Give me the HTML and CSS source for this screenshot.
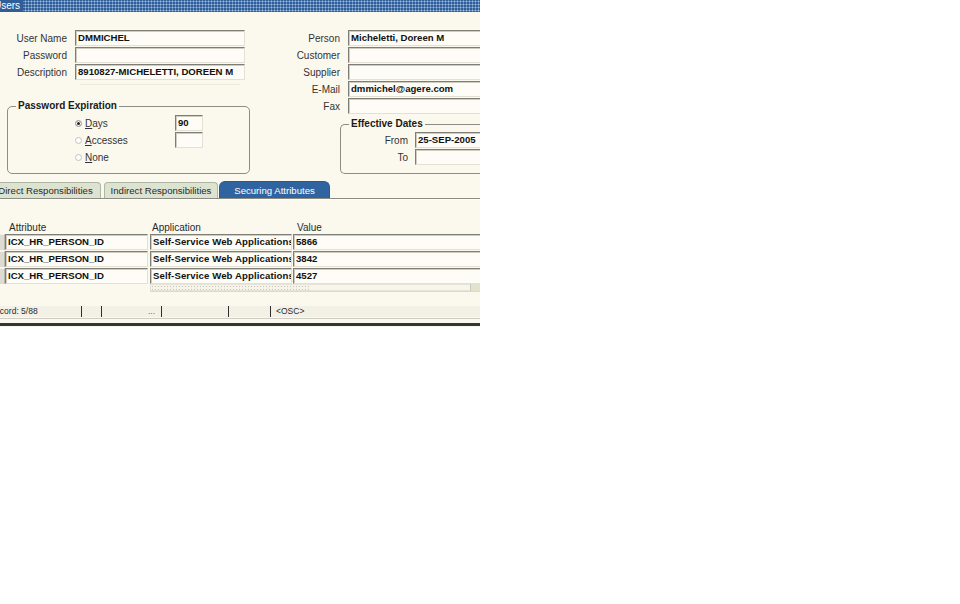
FILE: index.html
```html
<!DOCTYPE html>
<html>
<head>
<meta charset="utf-8">
<link rel="stylesheet" href="styles.css">
</head>
<body>
<div class="window">
  <div class="titlebar"><span class="title">Users</span></div>

  <div class="top">
    <div class="col-left">
      <div class="form form-left">
        <label class="lbl">User Name</label><div class="field">DMMICHEL</div>
        <label class="lbl">Password</label><div class="field"></div>
        <label class="lbl">Description</label><div class="field">8910827-MICHELETTI, DOREEN M</div>
      </div>
      <div class="faint-line"></div>
      <fieldset class="group group-pw">
        <legend>Password Expiration</legend>
        <div class="radio-grid">
          <div class="radio-item"><span class="radio checked"></span><span><u>D</u>ays</span></div>
          <div class="field small">90</div>
          <div class="radio-item"><span class="radio"></span><span><u>A</u>ccesses</span></div>
          <div class="field small"></div>
          <div class="radio-item"><span class="radio"></span><span><u>N</u>one</span></div>
          <div></div>
        </div>
      </fieldset>
    </div>

    <div class="col-right">
      <div class="form form-right">
        <label class="lbl">Person</label><div class="field">Micheletti, Doreen M</div>
        <label class="lbl">Customer</label><div class="field"></div>
        <label class="lbl">Supplier</label><div class="field"></div>
        <label class="lbl">E-Mail</label><div class="field">dmmichel@agere.com</div>
        <label class="lbl">Fax</label><div class="field"></div>
      </div>
      <fieldset class="group group-dates">
        <legend>Effective Dates</legend>
        <div class="date-grid">
          <label class="lbl">From</label><div class="field">25-SEP-2005</div>
          <label class="lbl">To</label><div class="field"></div>
        </div>
      </fieldset>
    </div>
  </div>

  <div class="tabs">
    <div class="tab tab-direct">Direct Responsibilities</div>
    <div class="tab tab-indirect">Indirect Responsibilities</div>
    <div class="tab tab-active">Securing Attributes</div>
  </div>

  <div class="table">
    <div class="thead">
      <div></div>
      <div class="th">Attribute</div>
      <div class="th">Application</div>
      <div class="th th-value">Value</div>
    </div>
    <div class="trow">
      <div class="indicator"></div>
      <div class="field cell-attr">ICX_HR_PERSON_ID</div>
      <div class="field cell-app">Self-Service Web Applications</div>
      <div class="field cell-val">5866</div>
    </div>
    <div class="trow">
      <div class="indicator"></div>
      <div class="field cell-attr">ICX_HR_PERSON_ID</div>
      <div class="field cell-app">Self-Service Web Applications</div>
      <div class="field cell-val">3842</div>
    </div>
    <div class="trow">
      <div class="indicator"></div>
      <div class="field cell-attr">ICX_HR_PERSON_ID</div>
      <div class="field cell-app">Self-Service Web Applications</div>
      <div class="field cell-val">4527</div>
    </div>
  </div>

  <div class="hscroll"><div class="track"></div><div class="plain"></div><div class="thumb"></div></div>

  <div class="status">
    <div class="seg seg1"><span class="rec">Record: 5/88</span></div>
    <div class="seg seg2"></div>
    <div class="seg seg3"><span class="dots">...</span></div>
    <div class="seg seg4"></div>
    <div class="seg seg5"></div>
    <div class="seg seg6">&lt;OSC&gt;</div>
  </div>
  <div class="bottom-light"></div>
  <div class="bottom-dark"></div>
</div>
</body>
</html>
```

FILE: styles.css
```css
* { box-sizing: border-box; }

body {
  margin: 0;
  background: #ffffff;
  font-family: "Liberation Sans", Arial, sans-serif;
  color: #1e1e1e;
}

.window {
  width: 480px;
  height: 327px;
  overflow: hidden;
  background: #fbf9ee;
  display: flex;
  flex-direction: column;
}

.titlebar {
  flex: 0 0 12px;
  height: 12px;
  background-color: #2f5e98;
  background-image: radial-gradient(circle, #9dbce0 0.8px, transparent 1.2px);
  background-size: 3px 3px;
  color: #ffffff;
  font-size: 10px;
  line-height: 12px;
  overflow: hidden;
  white-space: nowrap;
}
.title {
  display: inline-block;
  margin-left: -6px;
  padding-right: 3px;
  background: #2f5e98;
}

.top {
  flex: 0 0 162px;
  display: grid;
  grid-template-columns: 250px 230px;
  padding-top: 18px;
}

.form {
  display: grid;
  grid-auto-rows: 16px;
  row-gap: 1px;
  column-gap: 8px;
  align-items: center;
}
.form-left { grid-template-columns: 67px 170px; }
.form-right { grid-template-columns: 90px 140px; }

.lbl {
  font-size: 10px;
  line-height: 16px;
  padding-top: 1px;
  text-align: right;
  color: #333;
  white-space: nowrap;
}

.field {
  height: 16px;
  border: 1px solid;
  border-color: #7f7e76 #e4e1d4 #e4e1d4 #7f7e76;
  box-shadow: inset 1px 1px 0 #cfcdc2;
  background: #fdfcf6;
  font-size: 9.6px;
  font-weight: bold;
  line-height: 14px;
  padding-left: 2px;
  color: #111;
  white-space: nowrap;
  overflow: hidden;
}

.faint-line {
  margin: 4px 0 0 80px;
  width: 160px;
  height: 1px;
  background: #ecead8;
}

.group {
  margin: 0;
  padding: 0;
  border: 1px solid #8d8c86;
  border-radius: 5px;
  min-width: 0;
}
.group legend {
  margin-left: 8px;
  padding: 0 2px;
  font-size: 10px;
  font-weight: bold;
  line-height: 12px;
  color: #1a1a1a;
}

.group-pw {
  margin: 15px 0 0 7px;
  width: 243px;
  height: 74px;
  padding: 3px 0 0 0;
}
.radio-grid {
  display: grid;
  grid-template-columns: 100px 28px;
  grid-auto-rows: 16px;
  row-gap: 1px;
  margin-left: 67px;
  align-items: center;
}
.radio-item {
  display: flex;
  align-items: center;
  gap: 3px;
  font-size: 10px;
  color: #333;
}
.radio {
  width: 7px;
  height: 7px;
  border-radius: 50%;
  border: 1px solid #c4c2b8;
  background: #ffffff;
}
.radio.checked {
  border-color: #9a9890;
  box-shadow: inset 0 0 0 1px #fff, inset 0 0 0 3px #222;
}
.field.small { width: 28px; }

.group-dates {
  margin: 4px 0 0 90px;
  width: 150px;
  height: 56px;
  padding: 2px 0 0 0;
  border-right: none;
  border-radius: 5px 0 0 5px;
}
.date-grid {
  display: grid;
  grid-template-columns: 67px 90px;
  grid-auto-rows: 16px;
  row-gap: 1px;
  column-gap: 7px;
  align-items: center;
}

.tabs {
  flex: 0 0 17px;
  height: 17px;
  margin-top: 8px;
  margin-left: -14px;
  display: flex;
  align-items: flex-end;
  border-bottom: 1px solid #8c8b84;
  box-shadow: 0 1px 0 #ffffff;
}
.tab {
  height: 16px;
  font-size: 9.6px;
  line-height: 15px;
  text-align: center;
  white-space: nowrap;
  background: #dde3d1;
  border: 1px solid #aeb6a4;
  border-bottom: none;
  border-radius: 4px 4px 0 0;
  color: #2a2a2a;
}
.tab-direct { width: 115px; padding-left: 4px; }
.tab-indirect { width: 114px; margin-left: 3px; }
.tab-active {
  width: 111px;
  height: 17px;
  margin-left: 1px;
  background: #2f64a0;
  border-color: #2a5a90;
  color: #ffffff;
  border-radius: 6px 6px 0 0;
  line-height: 17px;
}

.table {
  margin-top: 22px;
  display: flex;
  flex-direction: column;
  gap: 1px;
}
.thead, .trow {
  display: grid;
  grid-template-columns: 5px 145px 143px 190px;
}
.thead {
  height: 13px;
  margin-bottom: -1px;
  font-size: 10px;
  line-height: 13px;
  color: #2a2a2a;
}
.th { padding-left: 4px; }
.th:nth-child(3) { padding-left: 2px; }
.trow { height: 16px; }
.indicator {
  height: 16px;
  background: #dedcd2;
  border-top: 1px solid #f4f2e8;
  border-right: 1px solid #b9b7ad;
}
.cell-attr { width: 143px; padding-left: 2px; }
.cell-app { width: 142px; letter-spacing: 0.12px; }
.cell-val { width: 190px; }

.hscroll {
  flex: 0 0 8px;
  margin-left: 150px;
  display: flex;
  border-bottom: 1px solid #dcdacd;
}
.track {
  width: 160px;
  background-color: #f6f4ea;
  background-image: radial-gradient(circle, #c7c5ba 0.6px, transparent 1px);
  background-size: 3px 3px;
  border: 1px solid #e6e4d8;
  border-right: none;
}
.plain {
  flex: 1;
  background: #f8f6ec;
  border-top: 1px solid #e6e4d8;
  border-bottom: 1px solid #e6e4d8;
}
.thumb {
  width: 10px;
  background: #e2e3cf;
  border-left: 1px solid #c9cbb2;
}

.status {
  flex: 0 0 11px;
  height: 11px;
  margin-top: 14px;
  display: flex;
  font-size: 8.5px;
  line-height: 11px;
  color: #2a2a2a;
  white-space: nowrap;
}
.seg {
  height: 11px;
  background: #f3f1e6;
  border-right: 1px solid #2e2e2e;
  overflow: hidden;
}
.seg1 { width: 82px; }
.seg2 { width: 20px; }
.seg3 { width: 60px; text-align: right; padding-right: 6px; }
.seg4 { width: 67px; }
.seg5 { width: 42px; }
.seg6 { flex: 1; border-right: none; padding-left: 5px; }
.rec { display: inline-block; margin-left: -11px; }
.dots { color: #666; }

.bottom-light {
  flex: 0 0 1px;
  margin-top: 1px;
  background: #cfcdc3;
}
.bottom-dark {
  flex: 0 0 3px;
  margin-top: 4px;
  background: #353535;
}
```
